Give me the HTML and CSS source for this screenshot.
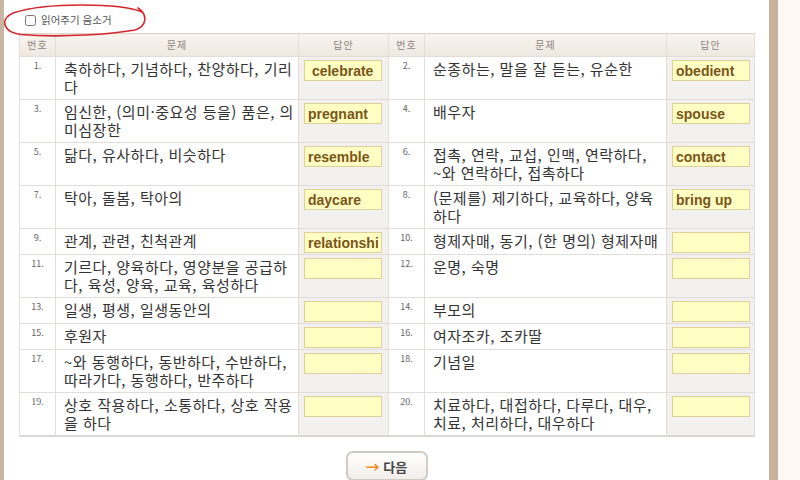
FILE: index.html
```html
<!DOCTYPE html>
<html lang="ko">
<head>
  <meta charset="UTF-8">
  <title>단어 시험</title>
  <link rel="stylesheet" href="styles.css">
</head>
<body>
  <div class="page">
    <div class="mute-row">
      <label><input type="checkbox" class="mute-box"> 읽어주기 음소거</label>
      <svg class="circle-mark" width="150" height="40" viewBox="0 0 150 40">
        <path d="M141 11 C120 2, 45 1, 12 12 C-1 18, 1 31, 20 33.5 C60 37, 112 33, 134 29 C146 25, 147 14, 137 7" fill="none" stroke="#d3262c" stroke-width="1.6" stroke-linecap="round"/>
      </svg>
    </div>

    <table class="quiz">
      <colgroup>
        <col class="c-no"><col class="c-q"><col class="c-a">
        <col class="c-no"><col class="c-q2"><col class="c-a2">
      </colgroup>
      <thead>
        <tr>
          <th>번호</th><th>문제</th><th>답안</th>
          <th>번호</th><th>문제</th><th>답안</th>
        </tr>
      </thead>
      <tbody>
        <tr>
          <td class="no">1.</td><td class="q">축하하다, 기념하다, 찬양하다, 기리다</td><td class="a"><input type="text" value=" celebrate"></td>
          <td class="no">2.</td><td class="q">순종하는, 말을 잘 듣는, 유순한</td><td class="a"><input type="text" value="obedient"></td>
        </tr>
        <tr>
          <td class="no">3.</td><td class="q">임신한, (의미·중요성 등을) 품은, 의미심장한</td><td class="a"><input type="text" value="pregnant"></td>
          <td class="no">4.</td><td class="q">배우자</td><td class="a"><input type="text" value="spouse"></td>
        </tr>
        <tr>
          <td class="no">5.</td><td class="q">닮다, 유사하다, 비슷하다</td><td class="a"><input type="text" value="resemble"></td>
          <td class="no">6.</td><td class="q">접촉, 연락, 교섭, 인맥, 연락하다, ~&#8288;와 연락하다, 접촉하다</td><td class="a"><input type="text" value="contact"></td>
        </tr>
        <tr>
          <td class="no">7.</td><td class="q">탁아, 돌봄, 탁아의</td><td class="a"><input type="text" value="daycare"></td>
          <td class="no">8.</td><td class="q">(문제를) 제기하다, 교육하다, 양육하다</td><td class="a"><input type="text" value="bring up"></td>
        </tr>
        <tr>
          <td class="no">9.</td><td class="q">관계, 관련, 친척관계</td><td class="a"><input type="text" value="relationship"></td>
          <td class="no">10.</td><td class="q">형제자매, 동기, (한 명의) 형제자매</td><td class="a"><input type="text" value=""></td>
        </tr>
        <tr>
          <td class="no">11.</td><td class="q">기르다, 양육하다, 영양분을 공급하다, 육성, 양육, 교육, 육성하다</td><td class="a"><input type="text" value=""></td>
          <td class="no">12.</td><td class="q">운명, 숙명</td><td class="a"><input type="text" value=""></td>
        </tr>
        <tr>
          <td class="no">13.</td><td class="q">일생, 평생, 일생동안의</td><td class="a"><input type="text" value=""></td>
          <td class="no">14.</td><td class="q">부모의</td><td class="a"><input type="text" value=""></td>
        </tr>
        <tr>
          <td class="no">15.</td><td class="q">후원자</td><td class="a"><input type="text" value=""></td>
          <td class="no">16.</td><td class="q">여자조카, 조카딸</td><td class="a"><input type="text" value=""></td>
        </tr>
        <tr>
          <td class="no">17.</td><td class="q">~&#8288;와 동행하다, 동반하다, 수반하다, 따라가다, 동행하다, 반주하다</td><td class="a"><input type="text" value=""></td>
          <td class="no">18.</td><td class="q">기념일</td><td class="a"><input type="text" value=""></td>
        </tr>
        <tr>
          <td class="no serif">19.</td><td class="q">상호 작용하다, 소통하다, 상호 작용을 하다</td><td class="a"><input type="text" value=""></td>
          <td class="no serif">20.</td><td class="q">치료하다, 대접하다, 다루다, 대우, 치료, 처리하다, 대우하다</td><td class="a"><input type="text" value=""></td>
        </tr>
      </tbody>
    </table>

    <div class="actions">
      <button type="button" class="next-btn"><span class="arrow">→</span> 다음</button>
    </div>
  </div>
</body>
</html>
```

FILE: styles.css
```css
body {
  margin: 0;
  background: #fdf9f2;
  font-family: "Noto Sans CJK KR", "Noto Sans", sans-serif;
}
.page {
  width: 765px;
  height: 480px;
  overflow: hidden;
  background: #fff;
  border-left: 4px solid #c9b6a2;
  border-right: 9px solid #c8b29c;
}
.mute-row {
  position: relative;
  height: 33px;
  padding-left: 21px;
  box-sizing: border-box;
  padding-top: 13px;
}
.mute-row label {
  display: flex;
  align-items: center;
  gap: 5px;
  font-size: 10.5px;
  color: #555;
  line-height: 14px;
}
.mute-box {
  margin: 0;
  width: 11px;
  height: 11px;
}
.circle-mark {
  position: absolute;
  left: -3px;
  top: 1px;
}
.quiz {
  margin-left: 15px;
  width: 735px;
  border-collapse: collapse;
  table-layout: fixed;
  border-bottom: 2px solid #ddd7d0;
}
.c-no { width: 36px; }
.c-q { width: 243px; }
.c-a { width: 90px; }
.c-q2 { width: 242px; }
.c-a2 { width: 88px; }
.quiz th {
  height: 22px;
  padding: 0;
  font-size: 10px;
  line-height: 12px;
  font-weight: normal;
  letter-spacing: 1px;
  color: #8c8580;
  background: linear-gradient(#f8f4ef, #efe8e0);
  border: 1px solid #e3ddd6;
  border-top-color: #ddd5cc;
}
.quiz td {
  border: 1px solid #e1ddd9;
  vertical-align: top;
  padding: 0;
}
.quiz td.no {
  font-size: 9px;
  color: #666;
  text-align: center;
  padding-top: 3px;
  line-height: 12px;
}
.quiz td.no.serif {
  font-family: "Liberation Serif", serif;
  font-size: 10px;
}
.quiz td.q {
  font-size: 15px;
  color: #333;
  line-height: 18px;
  letter-spacing: 0.5px;
  padding: 3px 2px 3px 8px;
}
.quiz td.a {
  background: #f3f1ef;
  padding: 3px 0 1px 5px;
}
.quiz td.a input {
  display: block;
  width: 78px;
  height: 21px;
  box-sizing: border-box;
  padding: 0 3px;
  border: 1px solid #ddd098;
  background: #ffffc4;
  font-family: "Liberation Sans", Arial, sans-serif;
  font-size: 14px;
  font-weight: bold;
  color: #7b5418;
}
.actions {
  display: flex;
  justify-content: center;
  padding-top: 14px;
}
.next-btn {
  width: 82px;
  height: 30px;
  padding: 0;
  border: 2px solid #d2cbc4;
  border-radius: 7px;
  background: linear-gradient(#ffffff, #f1eeea);
  font-family: "Noto Sans CJK KR", sans-serif;
  font-size: 13px;
  font-weight: bold;
  color: #444;
}
.next-btn .arrow {
  color: #f08a1c;
  font-size: 14px;
}
```
